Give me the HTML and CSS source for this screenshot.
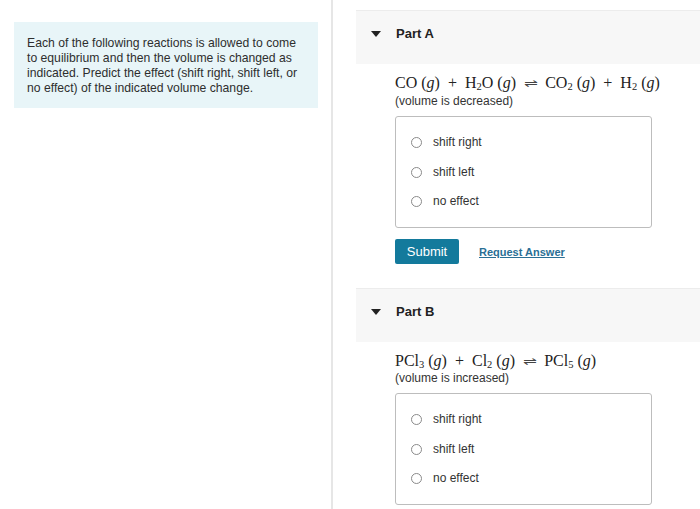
FILE: index.html
```html
<!DOCTYPE html>
<html>
<head>
<meta charset="utf-8">
<link rel="stylesheet" href="styles.css">
</head>
<body>
<div class="page">
  <aside class="intro-col">
    <div class="intro">Each of the following reactions is allowed to come to equilibrium and then the volume is changed as indicated. Predict the effect (shift right, shift left, or no effect) of the indicated volume change.</div>
  </aside>
  <main class="parts">
    <section class="part">
      <div class="part-head"><span class="caret"></span><span class="part-title">Part A</span></div>
      <div class="part-body">
        <div class="eq">CO<span class="g">(<i>g</i>)</span><span class="op">+</span>H<sub>2</sub>O<span class="g">(<i>g</i>)</span><span class="arrow">⇌</span>CO<sub>2</sub><span class="g">(<i>g</i>)</span><span class="op">+</span>H<sub>2</sub><span class="g">(<i>g</i>)</span></div>
        <div class="note">(volume is decreased)</div>
        <div class="options">
          <label class="opt"><span class="radio"></span>shift right</label>
          <label class="opt"><span class="radio"></span>shift left</label>
          <label class="opt"><span class="radio"></span>no effect</label>
        </div>
        <div class="actions">
          <button class="submit">Submit</button>
          <a class="request">Request Answer</a>
        </div>
      </div>
    </section>
    <section class="part part-b">
      <div class="part-head"><span class="caret"></span><span class="part-title">Part B</span></div>
      <div class="part-body">
        <div class="eq">PCl<sub>3</sub><span class="g">(<i>g</i>)</span><span class="op">+</span>Cl<sub>2</sub><span class="g">(<i>g</i>)</span><span class="arrow">⇌</span>PCl<sub>5</sub><span class="g">(<i>g</i>)</span></div>
        <div class="note">(volume is increased)</div>
        <div class="options">
          <label class="opt"><span class="radio"></span>shift right</label>
          <label class="opt"><span class="radio"></span>shift left</label>
          <label class="opt"><span class="radio"></span>no effect</label>
        </div>
      </div>
    </section>
  </main>
</div>
</body>
</html>
```
FILE: styles.css
```css
html, body {
  margin: 0;
  padding: 0;
  background: #ffffff;
  font-family: "Liberation Sans", Arial, sans-serif;
  color: #333333;
}
.page {
  display: flex;
  height: 509px;
  overflow: hidden;
}
.intro-col {
  width: 333px;
  flex: none;
  box-sizing: border-box;
  padding: 22px 13px 0 14px;
  border-right: 2px solid #e6e6e6;
}
.intro {
  background: #e8f5f8;
  padding: 14px 10px 12px 13px;
  font-size: 12.2px;
  line-height: 15px;
  color: #2e2e2e;
}
.parts {
  flex: 1;
  padding-top: 10px;
  padding-left: 23px;
}
.part-head {
  height: 54px;
  box-sizing: border-box;
  border-top: 1px solid #ececec;
  background: #f7f7f7;
  display: flex;
  align-items: flex-start;
  padding-left: 15px;
  padding-top: 15px;
}
.caret {
  width: 0;
  height: 0;
  border-left: 5px solid transparent;
  border-right: 5px solid transparent;
  border-top: 6px solid #222;
  margin-right: 15px;
  margin-top: 5px;
}
.part-title {
  font-weight: bold;
  font-size: 13px;
  line-height: 16px;
  color: #222;
}
.part-body {
  padding-left: 39px;
}
.eq {
  font-family: "Liberation Serif", "Times New Roman", serif;
  font-size: 16px;
  color: #222;
  margin-top: 9px;
  height: 20px;
  line-height: 20px;
  white-space: nowrap;
}
.eq sub {
  font-size: 10.5px;
  vertical-align: -2px;
  line-height: 0;
}
.eq .g { margin-left: 4px; }
.eq .op { margin: 0 8px; }
.eq .arrow {
  display: inline-block;
  margin: 0 10px;
  font-family: "DejaVu Sans", sans-serif;
  font-size: 11px;
  line-height: 10px;
  color: #444;
  transform: scaleX(1.5);
  vertical-align: 1px;
}
.note {
  font-size: 12px;
  line-height: 15px;
  color: #333;
  margin-top: 1px;
}
.options {
  margin-top: 7px;
  width: 257px;
  height: 112px;
  box-sizing: border-box;
  border: 1px solid #bdbdbd;
  border-radius: 3px;
  padding-top: 16px;
  padding-left: 15px;
  display: flex;
  flex-direction: column;
  gap: 10.5px;
}
.opt {
  display: flex;
  align-items: center;
  font-size: 12px;
  line-height: 19px;
  color: #333;
}
.radio {
  width: 9px;
  height: 9px;
  border: 1px solid #8a8a8a;
  border-radius: 50%;
  margin-right: 11px;
  background: #fff;
}
.actions {
  margin-top: 11px;
  display: flex;
  align-items: center;
}
.submit {
  width: 64px;
  height: 25px;
  border: none;
  border-radius: 2px;
  background: #137a9c;
  color: #ffffff;
  font-family: "Liberation Sans", Arial, sans-serif;
  font-size: 13px;
  padding: 0;
  margin-right: 20px;
}
.request {
  font-size: 11px;
  font-weight: bold;
  color: #2a6f95;
  text-decoration: underline;
}
.part-b {
  margin-top: 24px;
}
.part-b .eq {
  margin-top: 9px;
}
.part-b .note {
  margin-top: 0;
}
```
